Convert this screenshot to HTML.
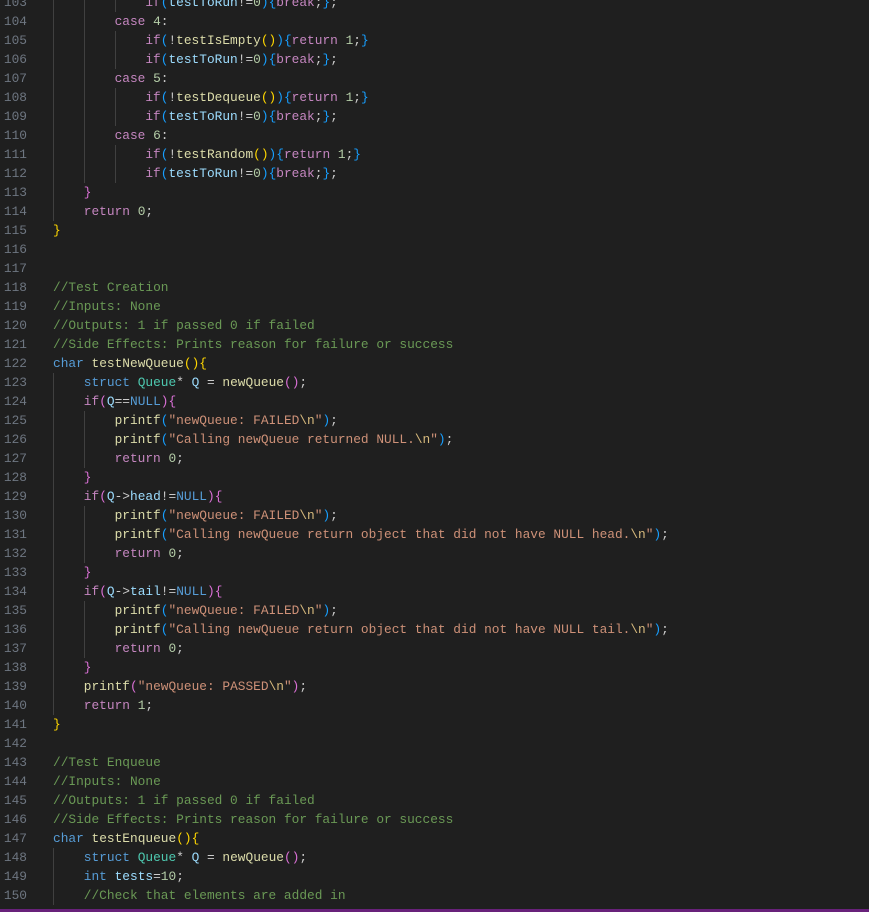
<!DOCTYPE html>
<html><head><meta charset="utf-8"><style>
html,body{margin:0;padding:0;background:#1f1f1f;width:869px;height:912px;overflow:hidden}
#ed{position:absolute;left:0;top:-7px;font-family:"Liberation Mono",monospace;font-size:12.83px;line-height:19px;color:#cccccc}
.r{height:19px;position:relative}
.ln{position:absolute;left:0;width:27px;text-align:right;color:#6e7681}
.cd{position:absolute;left:53px;white-space:pre}
.i{display:inline-block;width:4ch;height:19px;vertical-align:top;box-shadow:inset 1px 0 #404040}
.k{color:#c586c0}.b{color:#569cd6}.f{color:#dcdcaa}.v{color:#9cdcfe}.n{color:#b5cea8}.s{color:#ce9178}.e{color:#d7ba7d}.c{color:#6a9955}.t{color:#4ec9b0}.y{color:#ffd700}.p{color:#da70d6}.l{color:#179fff}
#bar{position:absolute;left:0;bottom:0;width:869px;height:3px;background:#68217a}
</style></head><body><div id="ed">
<div class="r"><span class="ln">103</span><span class="cd"><span class="i"></span><span class="i"></span><span class="i"></span><span class="k">if</span><span class="l">(</span><span class="v">testToRun</span>!=<span class="n">0</span><span class="l">)</span><span class="l">{</span><span class="k">break</span>;<span class="l">}</span>;</span></div>
<div class="r"><span class="ln">104</span><span class="cd"><span class="i"></span><span class="i"></span><span class="k">case</span> <span class="n">4</span>:</span></div>
<div class="r"><span class="ln">105</span><span class="cd"><span class="i"></span><span class="i"></span><span class="i"></span><span class="k">if</span><span class="l">(</span>!<span class="f">testIsEmpty</span><span class="y">()</span><span class="l">)</span><span class="l">{</span><span class="k">return</span> <span class="n">1</span>;<span class="l">}</span></span></div>
<div class="r"><span class="ln">106</span><span class="cd"><span class="i"></span><span class="i"></span><span class="i"></span><span class="k">if</span><span class="l">(</span><span class="v">testToRun</span>!=<span class="n">0</span><span class="l">)</span><span class="l">{</span><span class="k">break</span>;<span class="l">}</span>;</span></div>
<div class="r"><span class="ln">107</span><span class="cd"><span class="i"></span><span class="i"></span><span class="k">case</span> <span class="n">5</span>:</span></div>
<div class="r"><span class="ln">108</span><span class="cd"><span class="i"></span><span class="i"></span><span class="i"></span><span class="k">if</span><span class="l">(</span>!<span class="f">testDequeue</span><span class="y">()</span><span class="l">)</span><span class="l">{</span><span class="k">return</span> <span class="n">1</span>;<span class="l">}</span></span></div>
<div class="r"><span class="ln">109</span><span class="cd"><span class="i"></span><span class="i"></span><span class="i"></span><span class="k">if</span><span class="l">(</span><span class="v">testToRun</span>!=<span class="n">0</span><span class="l">)</span><span class="l">{</span><span class="k">break</span>;<span class="l">}</span>;</span></div>
<div class="r"><span class="ln">110</span><span class="cd"><span class="i"></span><span class="i"></span><span class="k">case</span> <span class="n">6</span>:</span></div>
<div class="r"><span class="ln">111</span><span class="cd"><span class="i"></span><span class="i"></span><span class="i"></span><span class="k">if</span><span class="l">(</span>!<span class="f">testRandom</span><span class="y">()</span><span class="l">)</span><span class="l">{</span><span class="k">return</span> <span class="n">1</span>;<span class="l">}</span></span></div>
<div class="r"><span class="ln">112</span><span class="cd"><span class="i"></span><span class="i"></span><span class="i"></span><span class="k">if</span><span class="l">(</span><span class="v">testToRun</span>!=<span class="n">0</span><span class="l">)</span><span class="l">{</span><span class="k">break</span>;<span class="l">}</span>;</span></div>
<div class="r"><span class="ln">113</span><span class="cd"><span class="i"></span><span class="p">}</span></span></div>
<div class="r"><span class="ln">114</span><span class="cd"><span class="i"></span><span class="k">return</span> <span class="n">0</span>;</span></div>
<div class="r"><span class="ln">115</span><span class="cd"><span class="y">}</span></span></div>
<div class="r"><span class="ln">116</span></div>
<div class="r"><span class="ln">117</span></div>
<div class="r"><span class="ln">118</span><span class="cd c">//Test Creation</span></div>
<div class="r"><span class="ln">119</span><span class="cd c">//Inputs: None</span></div>
<div class="r"><span class="ln">120</span><span class="cd c">//Outputs: 1 if passed 0 if failed</span></div>
<div class="r"><span class="ln">121</span><span class="cd c">//Side Effects: Prints reason for failure or success</span></div>
<div class="r"><span class="ln">122</span><span class="cd"><span class="b">char</span> <span class="f">testNewQueue</span><span class="y">(){</span></span></div>
<div class="r"><span class="ln">123</span><span class="cd"><span class="i"></span><span class="b">struct</span> <span class="t">Queue</span>* <span class="v">Q</span> = <span class="f">newQueue</span><span class="p">()</span>;</span></div>
<div class="r"><span class="ln">124</span><span class="cd"><span class="i"></span><span class="k">if</span><span class="p">(</span><span class="v">Q</span>==<span class="b">NULL</span><span class="p">){</span></span></div>
<div class="r"><span class="ln">125</span><span class="cd"><span class="i"></span><span class="i"></span><span class="f">printf</span><span class="l">(</span><span class="s">"newQueue: FAILED<span class="e">\n</span>"</span><span class="l">)</span>;</span></div>
<div class="r"><span class="ln">126</span><span class="cd"><span class="i"></span><span class="i"></span><span class="f">printf</span><span class="l">(</span><span class="s">"Calling newQueue returned NULL.<span class="e">\n</span>"</span><span class="l">)</span>;</span></div>
<div class="r"><span class="ln">127</span><span class="cd"><span class="i"></span><span class="i"></span><span class="k">return</span> <span class="n">0</span>;</span></div>
<div class="r"><span class="ln">128</span><span class="cd"><span class="i"></span><span class="p">}</span></span></div>
<div class="r"><span class="ln">129</span><span class="cd"><span class="i"></span><span class="k">if</span><span class="p">(</span><span class="v">Q</span>-&gt;<span class="v">head</span>!=<span class="b">NULL</span><span class="p">){</span></span></div>
<div class="r"><span class="ln">130</span><span class="cd"><span class="i"></span><span class="i"></span><span class="f">printf</span><span class="l">(</span><span class="s">"newQueue: FAILED<span class="e">\n</span>"</span><span class="l">)</span>;</span></div>
<div class="r"><span class="ln">131</span><span class="cd"><span class="i"></span><span class="i"></span><span class="f">printf</span><span class="l">(</span><span class="s">"Calling newQueue return object that did not have NULL head.<span class="e">\n</span>"</span><span class="l">)</span>;</span></div>
<div class="r"><span class="ln">132</span><span class="cd"><span class="i"></span><span class="i"></span><span class="k">return</span> <span class="n">0</span>;</span></div>
<div class="r"><span class="ln">133</span><span class="cd"><span class="i"></span><span class="p">}</span></span></div>
<div class="r"><span class="ln">134</span><span class="cd"><span class="i"></span><span class="k">if</span><span class="p">(</span><span class="v">Q</span>-&gt;<span class="v">tail</span>!=<span class="b">NULL</span><span class="p">){</span></span></div>
<div class="r"><span class="ln">135</span><span class="cd"><span class="i"></span><span class="i"></span><span class="f">printf</span><span class="l">(</span><span class="s">"newQueue: FAILED<span class="e">\n</span>"</span><span class="l">)</span>;</span></div>
<div class="r"><span class="ln">136</span><span class="cd"><span class="i"></span><span class="i"></span><span class="f">printf</span><span class="l">(</span><span class="s">"Calling newQueue return object that did not have NULL tail.<span class="e">\n</span>"</span><span class="l">)</span>;</span></div>
<div class="r"><span class="ln">137</span><span class="cd"><span class="i"></span><span class="i"></span><span class="k">return</span> <span class="n">0</span>;</span></div>
<div class="r"><span class="ln">138</span><span class="cd"><span class="i"></span><span class="p">}</span></span></div>
<div class="r"><span class="ln">139</span><span class="cd"><span class="i"></span><span class="f">printf</span><span class="p">(</span><span class="s">"newQueue: PASSED<span class="e">\n</span>"</span><span class="p">)</span>;</span></div>
<div class="r"><span class="ln">140</span><span class="cd"><span class="i"></span><span class="k">return</span> <span class="n">1</span>;</span></div>
<div class="r"><span class="ln">141</span><span class="cd"><span class="y">}</span></span></div>
<div class="r"><span class="ln">142</span></div>
<div class="r"><span class="ln">143</span><span class="cd c">//Test Enqueue</span></div>
<div class="r"><span class="ln">144</span><span class="cd c">//Inputs: None</span></div>
<div class="r"><span class="ln">145</span><span class="cd c">//Outputs: 1 if passed 0 if failed</span></div>
<div class="r"><span class="ln">146</span><span class="cd c">//Side Effects: Prints reason for failure or success</span></div>
<div class="r"><span class="ln">147</span><span class="cd"><span class="b">char</span> <span class="f">testEnqueue</span><span class="y">(){</span></span></div>
<div class="r"><span class="ln">148</span><span class="cd"><span class="i"></span><span class="b">struct</span> <span class="t">Queue</span>* <span class="v">Q</span> = <span class="f">newQueue</span><span class="p">()</span>;</span></div>
<div class="r"><span class="ln">149</span><span class="cd"><span class="i"></span><span class="b">int</span> <span class="v">tests</span>=<span class="n">10</span>;</span></div>
<div class="r"><span class="ln">150</span><span class="cd"><span class="i"></span><span class="c">//Check that elements are added in</span></span></div>
</div>
<div id="bar"></div>
</body></html>
